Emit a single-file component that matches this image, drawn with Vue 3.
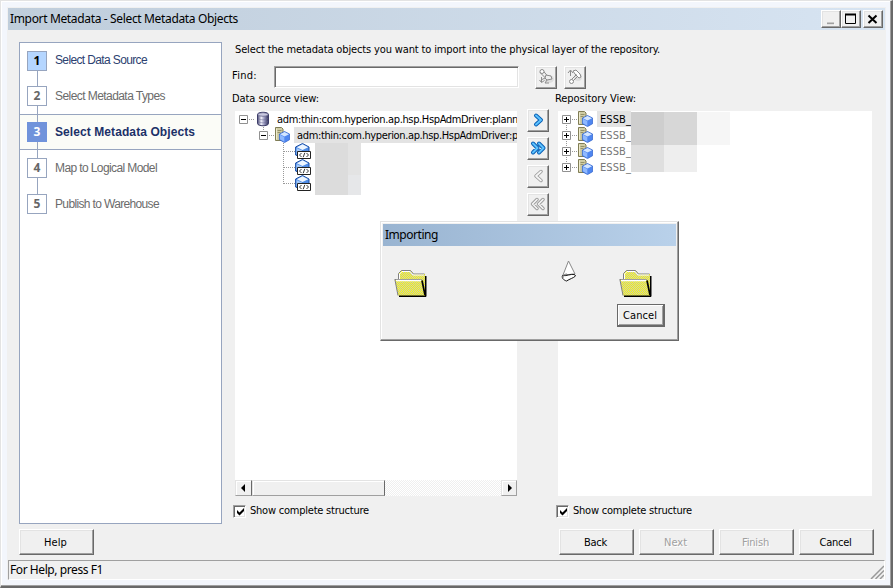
<script setup>
const vFit = {
	mounted(el, { value }) {
		const width = el.getBoundingClientRect().width;
		el.style.letterSpacing = `${(value - width) / el.textContent.trim().length}px`;
	},
};

const steps = [
	{ label: 'Select Data Source', state: 'done', width: 92 },
	{ label: 'Select Metadata Types', state: 'todo', width: 110 },
	{ label: 'Select Metadata Objects', state: 'active', width: 140 },
	{ label: 'Map to Logical Model', state: 'todo', width: 102 },
	{ label: 'Publish to Warehouse', state: 'todo', width: 104 },
];

const footer = [
	{ label: 'Back', disabled: false, width: 23 },
	{ label: 'Next', disabled: true, width: 23 },
	{ label: 'Finish', disabled: true, width: 27 },
	{ label: 'Cancel', disabled: false, width: 32 },
];
</script>

<template>
	<div class="window">
		<svg width="0" height="0" class="defs">
			<defs>
				<pattern id="dither" width="2" height="2" patternUnits="userSpaceOnUse">
					<rect width="2" height="2" fill="#c3c3c3" />
					<path d="M0 0h1v1H0zM1 1h1v1H1z" fill="#ffff00" />
				</pattern>
				<pattern id="dither-back" width="2" height="2" patternUnits="userSpaceOnUse">
					<rect width="2" height="2" fill="#ffff00" />
					<path d="M0 0h1v1H0zM1 1h1v1H1z" fill="#c3c3c3" />
				</pattern>
				<linearGradient id="metal" x1="0" x2="1">
					<stop offset="0" stop-color="#4a4a78" />
					<stop offset=".35" stop-color="#f0f0fa" />
					<stop offset=".65" stop-color="#8e8eb6" />
					<stop offset="1" stop-color="#303058" />
				</linearGradient>
				<symbol id="minus" viewBox="0 0 9 9">
					<path d="M.5 .5h8v8h-8z" fill="#fff" stroke="#919191" />
					<path d="M2 4.5h5" stroke="#000" />
				</symbol>
				<symbol id="plus" viewBox="0 0 9 9">
					<path d="M.5 .5h8v8h-8z" fill="#fff" stroke="#919191" />
					<path d="M2 4.5h5M4.5 2v5" stroke="#000" />
				</symbol>
				<symbol id="schema" viewBox="0 0 16 16">
					<path d="M1.5 .5h6l1.500 1.500v11.500h-7.500z" fill="#cfcca4" stroke="#807d55" />
					<path d="M2.5 1.5v11" stroke="#eeebcd" />
					<path d="M3.5 3.5h4M3.5 5.5h3" stroke="#85825a" stroke-width=".8" />
					<path d="M10.500 4.500 15.600 7v5.700l-5.100 2.900-5.100-2.900V7z" fill="#4f86f0" stroke="#2a5fc8" stroke-width=".7" />
					<path d="M10.500 5 15 7.200l-4.500 2.300L6 7.200z" fill="#d4e6ff" />
					<path d="M5.900 7.800l4.400 2.200v4.800l-4.400-2.500z" fill="#8fb9ff" />
				</symbol>
				<symbol id="cube" viewBox="0 0 16 16">
					<path d="M7.500 .500 14 4v8l-6.500 3L.600 12V4z" fill="#4f8ce6" stroke="#1d50a6" />
					<path d="M7.500 1.300 13.200 4.300 7.500 7 1.800 4.300z" fill="#eef6ff" />
					<path d="M1.500 5l5.500 2.500v6L1.500 11z" fill="#a5cbfa" />
					<path d="M2.500 8.500h13v7h-13z" fill="#fff" stroke="#222" />
					<path d="M6.500 10l-2 2 2 2M11.500 10l2 2-2 2M9.800 9.800l-1.600 4.400" fill="none" stroke="#222" stroke-width=".9" />
				</symbol>
				<symbol id="folder" viewBox="0 0 34 30">
					<path d="M31.500 7v20.500M5 27h27" stroke="#000" stroke-width="2" />
					<path d="M5 26V4l3-3h8l3 3v1h12v21z" fill="url(#dither-back)" />
					<path d="M4.500 10V4.500l3-3h9l3 3.500h11" fill="none" stroke="#808080" />
					<path d="M5.500 10V5l2.500-2.500h8l3 3.500h11" fill="none" stroke="#fff" />
					<path d="M1 11h26l4 15.500H4z" fill="url(#dither)" />
					<path d="M.500 10.500h27" stroke="#808080" />
					<path d="M2 11.500h25" stroke="#fff" stroke-width="1.500" />
					<path d="M1 11l3 15.500" stroke="#808080" />
					<path d="M28 11.500l3 14.500" stroke="#000" stroke-width="1.700" />
				</symbol>
			</defs>
		</svg>

		<header class="titlebar">
			<span v-fit="228" class="caption">Import Metadata - Select Metadata Objects</span>
			<div class="controls">
				<button class="control">
					<svg width="14" height="12"><path d="M3 10.500h7" stroke="#a0a0a0" stroke-width="2" /><path d="M3 12h8" stroke="#fff" /></svg>
				</button>
				<button class="control">
					<svg width="14" height="12"><path d="M1.500 1.500h10v9h-10z" fill="none" stroke="#000" /><path d="M1 1.500h11" stroke="#000" stroke-width="2" /></svg>
				</button>
				<button class="control close">
					<svg width="14" height="12"><path d="M2.500 2.500l8 7.500M10.500 2.500l-8 7.500" stroke="#000" stroke-width="2" /></svg>
				</button>
			</div>
		</header>

		<main class="content">
			<ol class="steps">
				<li v-for="(step, i) in steps" :key="step.label" class="step" :class="step.state">
					<span class="number">{{ i + 1 }}</span>
					<span v-fit="step.width" class="step-label">{{ step.label }}</span>
				</li>
			</ol>

			<section class="workspace">
				<p class="intro"><span v-fit="425">Select the metadata objects you want to import into the physical layer of the repository.</span></p>
				<div class="find">
					<label><span v-fit="25">Find:</span></label>
					<div class="input"></div>
					<button class="tool">
						<svg width="18" height="18" fill="none">
							<ellipse cx="12" cy="11" rx="5" ry="4" fill="#dedede" />
							<g stroke="#8b8b8b"><path d="M5.500 2l5 6M3 4.500l5 5" /><circle cx="5" cy="3.500" r="2" fill="#fff" /><path d="M9 7l5 1 1 3-5 1-2-2z" fill="#eee" /><path d="M8 10l-4 2M4.500 9v5M2.500 12l2 2.500 3-2M10 12l-2 3h4" /></g>
						</svg>
					</button>
					<button class="tool">
						<svg width="18" height="18" fill="none">
							<ellipse cx="12" cy="9" rx="4" ry="4" fill="#dedede" />
							<g stroke="#8b8b8b"><path d="M4.500 8V2.500M2 5l2.500-3L7 5" /><path d="M7 3l3-1 4 4 1 3-2 1-4-4z" fill="#fff" /><path d="M12 8l-6 6M10.500 6.500l-6 6" /><circle cx="5.500" cy="13.500" r="2" fill="#fff" /></g>
						</svg>
					</button>
				</div>

				<div class="views">
					<div class="view source">
						<h2><span v-fit="87">Data source view:</span></h2>
						<div class="tree">
							<div class="row">
								<svg width="39" height="16">
									<use href="#minus" x="4" y="4" width="9" height="9" />
									<path class="dots" d="M14 8.500h6" />
									<path d="M22.500 3.500c0-3 11-3 11 0v9c0 3-11 3-11 0z" fill="url(#metal)" stroke="#3c3c68" />
									<ellipse cx="28" cy="3.500" rx="5" ry="1.800" fill="#c9c9e0" stroke="#5a5a84" stroke-width=".7" />
									<path d="M23 7.500c2 1.800 8 1.800 10 0M23 10.500c2 1.800 8 1.800 10 0" fill="none" stroke="#6c6c94" stroke-width=".5" />
								</svg>
								<span class="node"><span v-fit="241">adm:thin:com.hyperion.ap.hsp.HspAdmDriver:plann</span></span>
							</div>
							<div class="row">
								<svg width="59" height="16">
									<path class="dots" d="M28.500 0v4" />
									<use href="#minus" x="24" y="4" width="9" height="9" />
									<path class="dots" d="M34 8.500h6" />
									<use href="#schema" x="39" y="0" width="16" height="16" />
								</svg>
								<span class="node selected"><span v-fit="221">adm:thin:com.hyperion.ap.hsp.HspAdmDriver:p</span></span>
							</div>
							<div v-for="n in 3" :key="n" class="row">
								<svg width="80" height="16">
									<path class="dots" :d="n < 3 ? 'M48.500 0v16M49 8.500h11' : 'M48.500 0v9M49 8.500h11'" />
									<use href="#cube" x="60" y="0" width="16" height="16" />
								</svg>
								<span class="mask" :class="{ last: n === 3 }"></span>
							</div>
							<div class="scrollbar">
								<div class="arrow"><svg width="12" height="12"><path d="M7 2v8L3 6z" /></svg></div>
								<div class="thumb"></div>
								<div class="arrow right"><svg width="12" height="12"><path d="M5 2v8l4-4z" /></svg></div>
							</div>
						</div>
					</div>

					<div class="transfer">
						<button class="tool">
							<svg width="18" height="18" fill="none" stroke-linecap="round" stroke-linejoin="round"><path d="M7 4.500l5 4.500-5 4.500" stroke="#0a5fb4" stroke-width="4" /><path d="M7 4.500l5 4.500-5 4.500" stroke="#5cc2ff" stroke-width="2" /></svg>
						</button>
						<button class="tool">
							<svg width="18" height="18" fill="none" stroke-linecap="round" stroke-linejoin="round"><g stroke="#0a5fb4" stroke-width="4"><path d="M4 4.500L8.500 9 4 13.500M10 4.500l4.500 4.500-4.500 4.500" /></g><g stroke="#5cc2ff" stroke-width="2"><path d="M4 4.500L8.500 9 4 13.500M10 4.500l4.500 4.500-4.500 4.500" /></g></svg>
						</button>
						<button class="tool">
							<svg width="18" height="18" fill="none" stroke-linecap="round" stroke-linejoin="round"><path d="M12 4.500L7 9l5 4.500" stroke="#999" stroke-width="3.500" /><path d="M12 4.500L7 9l5 4.500" stroke="#f5f5f5" stroke-width="1.700" /></svg>
						</button>
						<button class="tool">
							<svg width="18" height="18" fill="none" stroke-linecap="round" stroke-linejoin="round"><g stroke="#999" stroke-width="3.500"><path d="M8 4.500L3.500 9 8 13.500M14 4.500L9.500 9l4.500 4.500" /></g><g stroke="#f5f5f5" stroke-width="1.700"><path d="M8 4.500L3.500 9 8 13.500M14 4.500L9.500 9l4.500 4.500" /></g></svg>
						</button>
					</div>

					<div class="view repository">
						<h2><span v-fit="81">Repository View:</span></h2>
						<div class="tree">
							<div v-for="n in 4" :key="n" class="row">
								<svg width="39" height="16">
									<path v-if="n > 1" class="dots" d="M8.500 0v4" />
									<path v-if="n < 4" class="dots" d="M8.500 14v2" />
									<use href="#plus" x="4" y="4" width="9" height="9" />
									<path class="dots" d="M14 8.500h6" />
									<use href="#schema" x="19" y="0" width="16" height="16" />
								</svg>
								<span class="node" :class="n === 1 ? 'selected' : 'dim'"><span v-fit="31">ESSB_</span></span>
							</div>
							<div class="redaction">
								<i class="a"></i><i class="b"></i><i class="c"></i>
								<i class="d"></i><i class="e"></i>
							</div>
						</div>
					</div>
				</div>

				<div class="options">
					<label v-for="n in 2" :key="n" class="check">
						<span class="box"><svg width="9" height="9"><path d="M1 3l2.500 2.500L8 1v3L3.500 8.500 1 6z" /></svg></span>
						<span v-fit="119" class="check-label">Show complete structure</span>
					</label>
				</div>
			</section>
		</main>

		<div class="actions">
			<button class="btn help"><span v-fit="23">Help</span></button>
			<button v-for="b in footer" :key="b.label" class="btn" :class="{ disabled: b.disabled }">
				<span v-fit="b.width">{{ b.label }}</span>
			</button>
		</div>

		<footer class="status">
			<span v-fit="93">For Help, press F1</span>
			<svg width="14" height="14"><path d="M1 14L14 1M5.500 14L14 5.500M10 14l4-4" stroke="#999" stroke-width="1.500" /></svg>
		</footer>

		<div class="dialog">
			<div class="dialog-title"><span v-fit="53">Importing</span></div>
			<div class="dialog-body">
				<svg class="folder" width="34" height="30"><use href="#folder" width="34" height="30" /></svg>
				<svg class="paper" width="16" height="22">
					<path d="M7.500 1L2 15l12-1z" fill="#fff" stroke="#888" />
					<path d="M1.500 15.500c3 1 9-2 12-1l1 1.500c-2 2-6 3-9 5-3-1-5-3-4-5.500z" fill="#fff" stroke="#111" />
					<path d="M2 18c0-3 2-4 4-4" fill="none" stroke="#888" />
				</svg>
				<div class="dialog-end">
					<svg width="34" height="30"><use href="#folder" width="34" height="30" /></svg>
					<button class="btn default"><span v-fit="34">Cancel</span></button>
				</div>
			</div>
		</div>
	</div>
</template>

<style>
body {
	margin: 0;
	overflow: hidden;
}
</style>

<style scoped>
* {
	box-sizing: border-box;
}

.window {
	position: relative;
	display: flex;
	flex-direction: column;
	width: 893px;
	height: 588px;
	padding: 7px 6px 6px 7px;
	border: 1px solid #e3e3e3;
	border-right: 2px solid #696969;
	border-bottom: 2px solid #696969;
	background: linear-gradient(#f0f0f0, #f0f0f0) 6px 6px / 879px 573px no-repeat #f3f6fc;
	box-shadow: inset -1px -1px #a0a0a0, inset 1px 1px #fff;
	font: 11px/16px 'DejaVu Sans Condensed', 'DejaVu Sans', sans-serif;
	font-stretch: condensed;
	color: #000;
	white-space: nowrap;
}

.defs {
	position: absolute;
}

svg {
	display: block;
	flex: none;
}

button {
	display: flex;
	align-items: center;
	justify-content: center;
	padding: 0;
	font: inherit;
	color: inherit;
	background: #f0f0f0;
	border: 1px solid;
	border-color: #fff #696969 #696969 #fff;
	box-shadow: inset -1px -1px #a0a0a0, inset 1px 1px #e3e3e3;
}

/* Title bar */
.titlebar {
	display: flex;
	align-items: center;
	justify-content: space-between;
	flex: none;
	width: 877px;
	height: 22px;
	padding: 0 2px;
	background: linear-gradient(90deg, #bfcddb, #d7e4f2);
	font: 12px/20px 'Noto Sans', sans-serif;
}

.controls {
	display: flex;
}

.control {
	width: 20px;
	height: 18px;
}

.close {
	margin-left: 2px;
}

/* Body */
.content {
	display: flex;
	flex: none;
	height: 493px;
	padding: 12px 0 0 11px;
}

.steps {
	width: 203px;
	height: 482px;
	margin: 0;
	padding: 0;
	border: 1px solid #97a5bf;
	background: #fff;
	list-style: none;
	font: 12px/14px 'Liberation Sans', Arial, sans-serif;
}

.step {
	position: relative;
	display: flex;
	align-items: center;
	gap: 8px;
	height: 36px;
	padding-left: 7px;
	color: #6b6b6b;
}

.step:first-child {
	height: 35px;
}

.step:first-child .step-label {
	margin-top: -1px;
}

.step::before {
	content: '';
	position: absolute;
	left: 17px;
	top: 0;
	bottom: 0;
	width: 1px;
	background: #97a5bf;
}

.step:first-child::before {
	top: 18px;
}

.step:last-child::before {
	bottom: 18px;
}

.number {
	position: relative;
	width: 20px;
	height: 20px;
	border: 1px solid #97a5bf;
	background: #fff;
	font: bold 12px/18px 'Noto Sans', sans-serif;
	text-align: center;
	color: #666;
}

.step.done {
	color: #2c4170;
}

.done .number {
	background: #b5d6ff;
	color: #000;
}

.step.active {
	border: solid #97a5bf;
	border-width: 1px 0;
	background: #fbfcf7;
	font-weight: bold;
	color: #1b3168;
}

.active .number {
	background: #7093db;
	border-color: #7093db;
	color: #fff;
}

.workspace {
	width: 651px;
	padding-left: 10px;
}

.intro {
	margin: 0;
	padding: 0 0 0 3px;
	height: 24px;
	line-height: 16px;
}

.find {
	display: flex;
	height: 23px;
}

.find label {
	width: 42px;
	line-height: 20px;
}

.input {
	width: 245px;
	height: 22px;
	margin-right: 16px;
	border: 1px solid;
	border-color: #a0a0a0 #fff #fff #a0a0a0;
	background: #fff;
	box-shadow: inset 1px 1px #696969, inset -1px -1px #e3e3e3;
}

.tool {
	width: 22px;
	height: 23px;
	padding-bottom: 2px;
}

.find .tool {
	margin-right: 7px;
}

/* Trees */
.views {
	display: flex;
	height: 407px;
}

h2 {
	height: 22px;
	margin: 0;
	font: inherit;
	line-height: 20px;
}

.source {
	width: 285px;
}

.source .tree {
	width: 282px;
	margin-left: 3px;
}

.repository h2 {
	margin-left: -3px;
}

.tree {
	position: relative;
	display: flex;
	flex-direction: column;
	height: 385px;
	overflow: hidden;
	background: #fff;
}

.repository .tree {
	width: 314px;
}

.row {
	display: flex;
	height: 16px;
	flex: none;
}

.dots {
	stroke: #999;
	stroke-dasharray: 1 1;
	fill: none;
}

.node {
	display: flex;
	padding: 0 0 0 3px;
	line-height: 18px;
}

.selected {
	background: #e3e3e3;
}

.dim {
	color: #777;
}

.mask {
	width: 46px;
	height: 17px;
	margin-right: auto;
	background: linear-gradient(90deg, #dcdcdc 33px, #e3e3e3 33px);
}

.mask.last {
	height: 20px;
	background: linear-gradient(90deg, #dcdcdc 33px, #e6e7e9 33px);
}

.redaction {
	position: absolute;
	left: 73px;
	top: 1px;
	display: grid;
	grid-template-columns: 33px 33px 33px;
	grid-template-rows: 33px 27px;
}

.a { background: #cecece; }
.b { background: #d7d7d7; }
.c { background: #f6f6f6; }
.d { background: #dfdfdf; }
.e { background: #eeeeee; }

.scrollbar {
	display: flex;
	height: 16px;
	margin-top: auto;
	background: repeating-conic-gradient(#fff 0 25%, #efefef 0 50%) 0 0 / 2px 2px;
}

.arrow,
.thumb {
	display: flex;
	align-items: center;
	justify-content: center;
	width: 17px;
	background: #f0f0f0;
	border: 1px solid;
	border-color: #e3e3e3 #696969 #a0a0a0 #e3e3e3;
	box-shadow: inset 1px 1px #fff;
}

.thumb {
	width: 133px;
}

.arrow.right {
	width: 16px;
	margin-left: auto;
	border-right-color: #a0a0a0;
}

.transfer {
	display: flex;
	flex-direction: column;
	gap: 5px;
	width: 41px;
	padding: 20px 0 0 10px;
}

.options {
	display: flex;
	padding: 6px 0 0 1px;
}

.check {
	display: flex;
	align-items: center;
	gap: 4px;
	width: 323px;
}

.check-label {
	line-height: 18px;
}

.box {
	width: 13px;
	height: 13px;
	padding: 1px;
	background: #fff;
	border: 1px solid;
	border-color: #a0a0a0 #fff #fff #a0a0a0;
	box-shadow: inset 1px 1px #696969, inset -1px -1px #e3e3e3;
}

.box svg {
	margin-left: 1px;
}

.check {
	flex: none;
}

/* Footer */
.actions {
	display: flex;
	gap: 5px;
	height: 37px;
	padding: 6px 0 0 11px;
}

.btn {
	width: 75px;
	height: 26px;
	padding: 1px 2px 0 0;
}

.help {
	margin-right: 460px;
}

.disabled {
	color: #a0a0a0;
	text-shadow: 1px 1px #fff;
}

.status {
	display: flex;
	justify-content: space-between;
	width: 877px;
	height: 20px;
	border: 1px solid;
	border-color: #a0a0a0 #fff #fff #a0a0a0;
	padding: 0 0 0 1px;
	font: 12px/18px 'Noto Sans', sans-serif;
}

.status svg {
	align-self: flex-end;
}

/* Import progress dialog */
.dialog {
	position: absolute;
	left: 379px;
	top: 220px;
	width: 299px;
	height: 120px;
	padding: 2px;
	background: #f0f0f0;
	border: 1px solid;
	border-color: #e3e3e3 #696969 #696969 #e3e3e3;
	box-shadow: inset -1px -1px #a0a0a0, inset 1px 1px #fff;
}

.dialog-title {
	height: 22px;
	padding-left: 2px;
	background: linear-gradient(90deg, #99b4d1, #b9d1ea);
	font: 12px/22px 'Noto Sans', sans-serif;
}

.dialog-body {
	display: flex;
	align-items: flex-start;
	padding: 14px 11px 0 11px;
}

.folder {
	margin-top: 9px;
}

.paper {
	margin-left: 133px;
}

.dialog-end {
	display: flex;
	flex-direction: column;
	gap: 5px;
	margin: 9px 0 0 auto;
}

.dialog-end svg {
	margin-left: 2px;
}

.default {
	width: 48px;
	height: 23px;
	border-color: #696969;
	box-shadow: inset -1px -1px #696969, inset 1px 1px #fff, inset -2px -2px #a0a0a0;
}
</style>
